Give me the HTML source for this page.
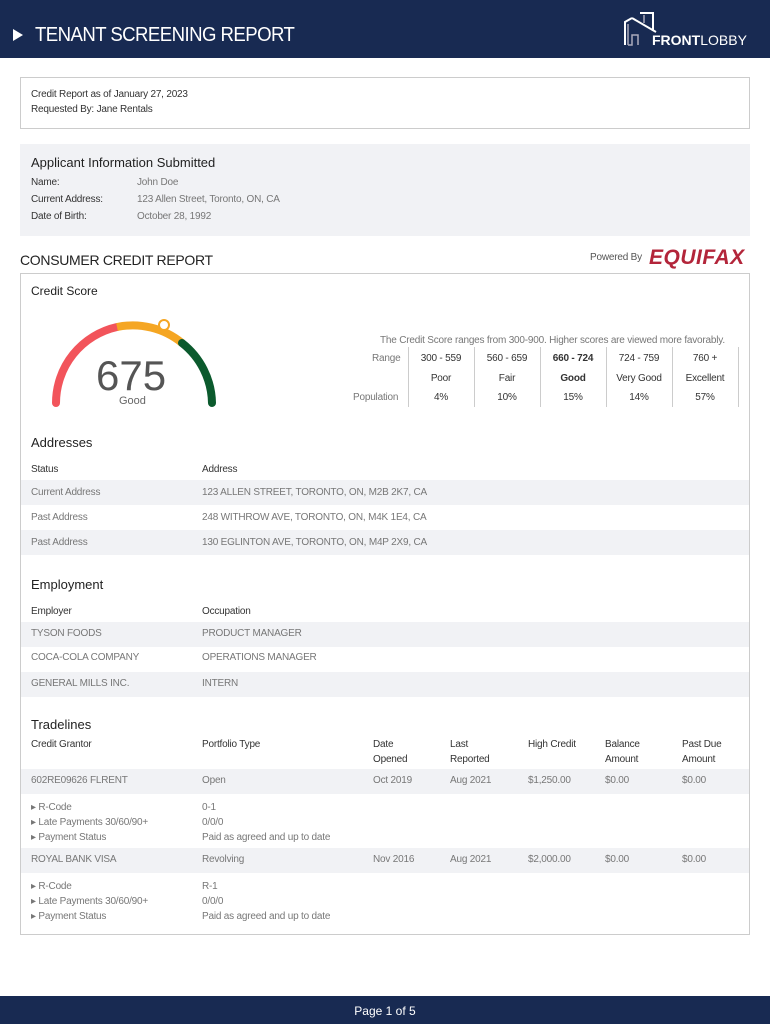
<!DOCTYPE html>
<html><head><meta charset="utf-8"><style>
*{margin:0;padding:0;box-sizing:border-box}
body{width:770px;height:1024px;position:relative;background:#fff;font-family:"Liberation Sans",sans-serif;color:#333;overflow:hidden}
.a{position:absolute;white-space:nowrap}
.hdr{position:absolute;left:0;top:0;width:770px;height:58px;background:#182a52}
.ftr{position:absolute;left:0;top:996px;width:770px;height:28px;background:#182a52;color:#fff;font-size:12px;text-align:center;line-height:30px}
.s{font-size:10px;color:#333;letter-spacing:-0.2px}
.g{font-size:10px;color:#777;letter-spacing:-0.2px}
.h{font-size:13px;color:#222}
.band{position:absolute;left:21px;width:728px;height:25px;background:#f1f2f5}
.box{position:absolute;border:1px solid #ccc}
.vl{position:absolute;width:1px;background:#ccc}
</style></head><body>
<div class="hdr"></div>
<div class="a" style="left:13px;top:29px;width:0;height:0;border-left:10px solid #fff;border-top:6px solid transparent;border-bottom:6px solid transparent"></div>
<div class="a" style="left:35px;top:24px;color:#fff;font-size:20px;letter-spacing:-0.6px;transform:scaleX(0.93);transform-origin:left">TENANT SCREENING REPORT</div>
<svg class="a" style="left:622px;top:11px" width="36" height="36" viewBox="0 0 36 36">
<path d="M3 34V11L10 7M19 3V2H31V20" fill="none" stroke="#fff" stroke-width="2"/>
<path d="M10 7L34 21" fill="none" stroke="#fff" stroke-width="2"/>
<path d="M6 34V13M22 4V12M6 34H10V24H16V34" fill="none" stroke="#aab" stroke-width="1.5"/>
</svg>
<div class="a" style="left:652px;top:32px;color:#fff;font-size:14px"><b>FRONT</b>LOBBY</div>

<div class="box" style="left:20px;top:77px;width:730px;height:52px"></div>
<div class="a s" style="left:31px;top:89px">Credit Report as of January 27, 2023</div>
<div class="a s" style="left:31px;top:104px">Requested By: Jane Rentals</div>

<div class="a" style="left:20px;top:144px;width:730px;height:92px;background:#f1f2f5"></div>
<div class="a h" style="left:31px;top:155px">Applicant Information Submitted</div>
<div class="a s" style="left:31px;top:177px">Name:</div><div class="a g" style="left:137px;top:177px">John Doe</div>
<div class="a s" style="left:31px;top:194px">Current Address:</div><div class="a g" style="left:137px;top:194px">123 Allen Street, Toronto, ON, CA</div>
<div class="a s" style="left:31px;top:211px">Date of Birth:</div><div class="a g" style="left:137px;top:211px">October 28, 1992</div>

<div class="a" style="left:20px;top:252px;font-size:14px;color:#222;letter-spacing:-0.3px">CONSUMER CREDIT REPORT</div>
<div class="a g" style="left:590px;top:252px;color:#555">Powered By</div>
<div class="a" style="left:649px;top:246px;font-size:21px;font-weight:bold;font-style:italic;color:#b3253a;letter-spacing:0.5px">EQUIFAX</div>

<div class="box" style="left:20px;top:273px;width:730px;height:662px"></div>
<div class="a h" style="left:31px;top:284px;font-size:12px">Credit Score</div>
<svg class="a" style="left:40px;top:305px" width="190" height="110" viewBox="40 305 190 110">
<path d="M56 403 A78 78 0 0 1 117 327" fill="none" stroke="#f2545b" stroke-width="8" stroke-linecap="round"/>
<path d="M117 327 A78 78 0 0 1 182 343" fill="none" stroke="#f5a623" stroke-width="8"/>
<path d="M182 343 A78 78 0 0 1 212 403" fill="none" stroke="#0b5a2d" stroke-width="8" stroke-linecap="round"/>
<circle cx="164" cy="325" r="5" fill="#fff" stroke="#f5a623" stroke-width="2"/>
</svg>
<div class="a" style="left:96px;top:352px;font-size:42px;color:#555">675</div>
<div class="a" style="left:119px;top:395px;font-size:11px;color:#666">Good</div>

<div class="a g" style="left:380px;top:335px">The Credit Score ranges from 300-900. Higher scores are viewed more favorably.</div>
<div class="a g" style="left:372px;top:353px">Range</div>
<div class="a g" style="left:353px;top:392px">Population</div>
<div class="vl" style="left:408px;top:347px;height:60px"></div>
<div class="vl" style="left:474px;top:347px;height:60px"></div>
<div class="vl" style="left:540px;top:347px;height:60px"></div>
<div class="vl" style="left:606px;top:347px;height:60px"></div>
<div class="vl" style="left:672px;top:347px;height:60px"></div>
<div class="vl" style="left:738px;top:347px;height:60px"></div>
<div class="a s" style="left:408px;width:66px;text-align:center;top:353px">300 - 559</div>
<div class="a s" style="left:474px;width:66px;text-align:center;top:353px">560 - 659</div>
<div class="a s" style="left:540px;width:66px;text-align:center;top:353px;font-weight:bold">660 - 724</div>
<div class="a s" style="left:606px;width:66px;text-align:center;top:353px">724 - 759</div>
<div class="a s" style="left:672px;width:66px;text-align:center;top:353px">760 +</div>
<div class="a s" style="left:408px;width:66px;text-align:center;top:373px">Poor</div>
<div class="a s" style="left:474px;width:66px;text-align:center;top:373px">Fair</div>
<div class="a s" style="left:540px;width:66px;text-align:center;top:373px;font-weight:bold">Good</div>
<div class="a s" style="left:606px;width:66px;text-align:center;top:373px">Very Good</div>
<div class="a s" style="left:672px;width:66px;text-align:center;top:373px">Excellent</div>
<div class="a s" style="left:408px;width:66px;text-align:center;top:392px">4%</div>
<div class="a s" style="left:474px;width:66px;text-align:center;top:392px">10%</div>
<div class="a s" style="left:540px;width:66px;text-align:center;top:392px">15%</div>
<div class="a s" style="left:606px;width:66px;text-align:center;top:392px">14%</div>
<div class="a s" style="left:672px;width:66px;text-align:center;top:392px">57%</div>

<div class="a h" style="left:31px;top:435px">Addresses</div>
<div class="a s" style="left:31px;top:464px">Status</div><div class="a s" style="left:202px;top:464px">Address</div>
<div class="band" style="top:480px"></div>
<div class="band" style="top:530px"></div>
<div class="a g" style="left:31px;top:487px">Current Address</div><div class="a g" style="left:202px;top:487px">123 ALLEN STREET, TORONTO, ON, M2B 2K7, CA</div>
<div class="a g" style="left:31px;top:512px">Past Address</div><div class="a g" style="left:202px;top:512px">248 WITHROW AVE, TORONTO, ON, M4K 1E4, CA</div>
<div class="a g" style="left:31px;top:537px">Past Address</div><div class="a g" style="left:202px;top:537px">130 EGLINTON AVE, TORONTO, ON, M4P 2X9, CA</div>

<div class="a h" style="left:31px;top:577px">Employment</div>
<div class="a s" style="left:31px;top:606px">Employer</div><div class="a s" style="left:202px;top:606px">Occupation</div>
<div class="band" style="top:622px"></div>
<div class="band" style="top:672px"></div>
<div class="a g" style="left:31px;top:628px">TYSON FOODS</div><div class="a g" style="left:202px;top:628px">PRODUCT MANAGER</div>
<div class="a g" style="left:31px;top:652px">COCA-COLA COMPANY</div><div class="a g" style="left:202px;top:652px">OPERATIONS MANAGER</div>
<div class="a g" style="left:31px;top:678px">GENERAL MILLS INC.</div><div class="a g" style="left:202px;top:678px">INTERN</div>

<div class="a h" style="left:31px;top:717px">Tradelines</div>
<div class="a s" style="left:31px;top:739px">Credit Grantor</div>
<div class="a s" style="left:202px;top:739px">Portfolio Type</div>
<div class="a s" style="left:373px;top:737px;line-height:15px">Date<br>Opened</div>
<div class="a s" style="left:450px;top:737px;line-height:15px">Last<br>Reported</div>
<div class="a s" style="left:528px;top:739px">High Credit</div>
<div class="a s" style="left:605px;top:737px;line-height:15px">Balance<br>Amount</div>
<div class="a s" style="left:682px;top:737px;line-height:15px">Past Due<br>Amount</div>
<div class="band" style="top:769px"></div>
<div class="band" style="top:848px"></div>
<div class="a g" style="left:31px;top:775px">602RE09626 FLRENT</div><div class="a g" style="left:202px;top:775px">Open</div><div class="a g" style="left:373px;top:775px">Oct 2019</div><div class="a g" style="left:450px;top:775px">Aug 2021</div><div class="a g" style="left:528px;top:775px">$1,250.00</div><div class="a g" style="left:605px;top:775px">$0.00</div><div class="a g" style="left:682px;top:775px">$0.00</div>
<div class="a g" style="left:31px;top:800px;line-height:15px">▸ R-Code<br>▸ Late Payments 30/60/90+<br>▸ Payment Status</div>
<div class="a g" style="left:202px;top:800px;line-height:15px">0-1<br>0/0/0<br>Paid as agreed and up to date</div>
<div class="a g" style="left:31px;top:854px">ROYAL BANK VISA</div><div class="a g" style="left:202px;top:854px">Revolving</div><div class="a g" style="left:373px;top:854px">Nov 2016</div><div class="a g" style="left:450px;top:854px">Aug 2021</div><div class="a g" style="left:528px;top:854px">$2,000.00</div><div class="a g" style="left:605px;top:854px">$0.00</div><div class="a g" style="left:682px;top:854px">$0.00</div>
<div class="a g" style="left:31px;top:879px;line-height:15px">▸ R-Code<br>▸ Late Payments 30/60/90+<br>▸ Payment Status</div>
<div class="a g" style="left:202px;top:879px;line-height:15px">R-1<br>0/0/0<br>Paid as agreed and up to date</div>

<div class="ftr">Page 1 of 5</div>
</body></html>
